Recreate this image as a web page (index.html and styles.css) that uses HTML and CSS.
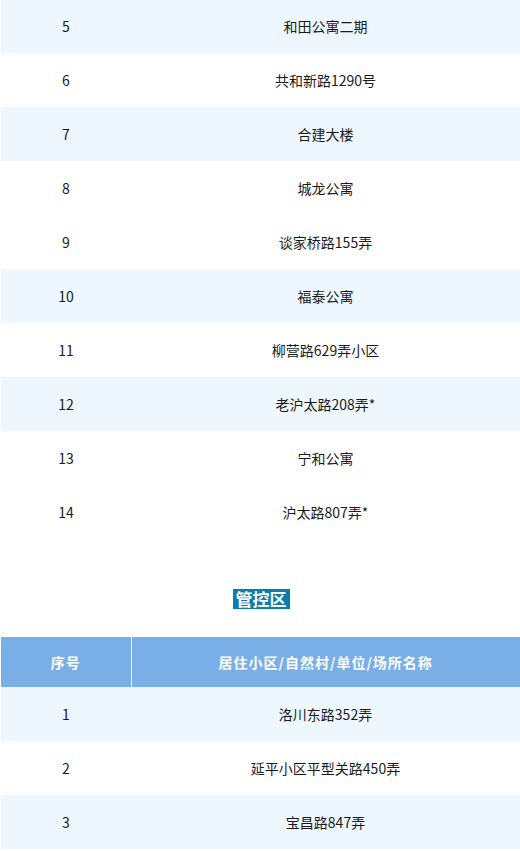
FILE: index.html
```html
<!DOCTYPE html>
<html lang="zh">
<head>
<meta charset="utf-8">
<link rel="stylesheet" href="styles.css">
</head>
<body>
<div class="page">
  <table class="grid first">
    <colgroup><col class="c1"><col class="c2"></colgroup>
    <tbody>
      <tr class="alt"><td>5</td><td>和田公寓二期</td></tr>
      <tr><td>6</td><td>共和新路1290号</td></tr>
      <tr class="alt"><td>7</td><td>合建大楼</td></tr>
      <tr><td>8</td><td>城龙公寓</td></tr>
      <tr><td>9</td><td>谈家桥路155弄</td></tr>
      <tr class="alt"><td>10</td><td>福泰公寓</td></tr>
      <tr><td>11</td><td>柳营路629弄小区</td></tr>
      <tr class="alt"><td>12</td><td>老沪太路208弄*</td></tr>
      <tr><td>13</td><td>宁和公寓</td></tr>
      <tr><td>14</td><td>沪太路807弄*</td></tr>
    </tbody>
  </table>

  <div class="title-wrap"><span class="title">管控区</span></div>

  <table class="grid">
    <colgroup><col class="c1"><col class="c2"></colgroup>
    <thead>
      <tr><th>序号</th><th>居住小区/自然村/单位/场所名称</th></tr>
    </thead>
    <tbody>
      <tr class="alt"><td>1</td><td>洛川东路352弄</td></tr>
      <tr><td>2</td><td>延平小区平型关路450弄</td></tr>
      <tr class="alt"><td>3</td><td>宝昌路847弄</td></tr>
    </tbody>
  </table>
</div>
</body>
</html>
```

FILE: styles.css
```css
html, body {
  margin: 0;
  padding: 0;
  background: #ffffff;
}
body {
  font-family: "Microsoft YaHei", "Noto Sans CJK SC", "Noto Sans", sans-serif;
  color: #1a1a1a;
  overflow: hidden;
}
.page {
  padding-left: 1px;
  margin-top: -1px;
}
.grid {
  width: 519px;
  border-collapse: collapse;
  table-layout: fixed;
}
.c1 { width: 130px; }
.grid td {
  height: 54px;
  padding: 0;
  text-align: center;
  vertical-align: middle;
  font-size: 14px;
  line-height: 20px;
}
.grid tr.alt td {
  background: #eef7fe;
}
.grid th {
  height: 50px;
  padding: 0;
  background: #7aaee6;
  color: #ffffff;
  font-weight: bold;
  font-size: 14px;
  letter-spacing: 1px;
  text-align: center;
  vertical-align: middle;
}
.grid th + th {
  border-left: 1px solid #ffffff;
}
.title-wrap {
  display: flex;
  justify-content: center;
  padding-top: 50px;
  padding-bottom: 28px;
}
.title {
  display: block;
  margin-left: 1px;
  height: 20px;
  line-height: 20px;
  padding: 0 3px;
  background: #0d7bab;
  color: #ffffff;
  font-weight: bold;
  font-size: 17px;
}
```
